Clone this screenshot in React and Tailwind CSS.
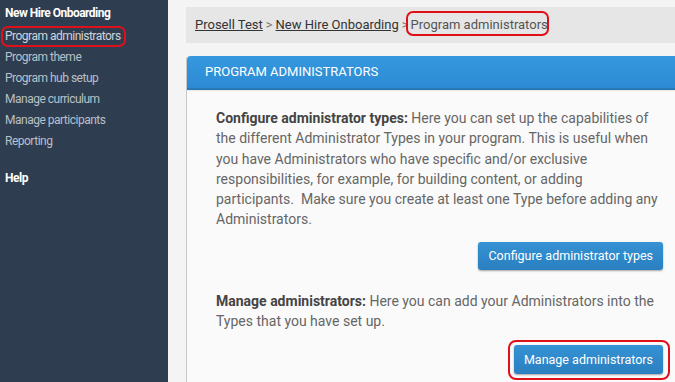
import React from "react";

const items = [
  "Program theme",
  "Program hub setup",
  "Manage curriculum",
  "Manage participants",
  "Reporting",
];

export default function App() {
  return (
    <div className="flex h-[382px] w-[675px] overflow-hidden bg-[#f4f4f4]" style={{ fontFamily: "Roboto, 'Liberation Sans', sans-serif" }}>
      <aside className="w-[168px] shrink-0 bg-[#2e3d4f] pl-[5px] pt-[3px] text-[12px] tracking-[-0.5px]">
        <div className="font-bold text-white leading-[21px]">New Hire Onboarding</div>
        <div className="relative mt-[2px] leading-[21px] text-[#cfd4da]">
          <span className="absolute left-[-4px] top-[0px] h-[21px] w-[125px] rounded-[7px] border-2 border-[#e0101a]" />
          Program administrators
        </div>
        {items.map((t) => (
          <div key={t} className="leading-[21px] text-[#b9c0c8]">
            {t}
          </div>
        ))}
        <div className="mt-[16px] font-bold text-white leading-[21px]">Help</div>
      </aside>
      <main className="flex-1 pl-[18px] pt-[7px]">
        <div className="flex h-[36px] items-center bg-[#e6e6e6] pl-[9px] text-[13px] text-[#777]">
          <span className="text-[#333] underline">Prosell Test</span>
          <span className="mx-[3px]">&gt;</span>
          <span className="text-[#333] underline">New Hire Onboarding</span>
          <span className="ml-[3px]">&gt;</span>
          <span className="relative ml-[2px] text-[#555]">
            <span className="absolute left-[-5px] top-[-4px] h-[25px] w-[143px] rounded-[7px] border-2 border-[#e0101a]" />
            Program administrators
          </span>
        </div>
        <div className="mt-[13px] h-[400px] rounded-tl-[4px] border-l border-[#c8c8c8] bg-[#fafafa]">
          <div className="flex h-[34px] items-center rounded-tl-[4px] border-b-2 border-[#2a78b4] bg-gradient-to-b from-[#3598de] to-[#2c8ad4] pl-[18px] text-[13px] text-white">
            PROGRAM ADMINISTRATORS
          </div>
          <div className="border-t border-[#e8e8e8] pl-[29px] pr-[12px] pt-[17px] text-[14px] leading-[20.3px] text-[#666]">
            <p>
              <span className="font-bold text-[#444]">Configure administrator types:</span> Here you can set up the capabilities of the different Administrator Types in your program. This is useful when you have Administrators who have specific and/or exclusive responsibilities, for example, for building content, or adding participants.&nbsp; Make sure you create at least one Type before adding any Administrators.
            </p>
            <div className="mt-[12px] flex justify-end">
              <button className="h-[28px] rounded-[3px] bg-gradient-to-b from-[#3592d4] to-[#2a7fc0] px-[10px] text-[12.5px] text-white shadow-[0_1px_2px_rgba(0,0,0,0.35)]">
                Configure administrator types
              </button>
            </div>
            <p className="mt-[21px]">
              <span className="font-bold text-[#444]">Manage administrators:</span> Here you can add your Administrators into the Types that you have set up.
            </p>
            <div className="mt-[14px] flex justify-end">
              <div className="relative">
                <span className="absolute left-[-6px] top-[-5px] h-[40px] w-[162px] rounded-[8px] border-2 border-[#e0101a]" />
                <button className="h-[29px] rounded-[3px] bg-gradient-to-b from-[#3592d4] to-[#2a7fc0] px-[10px] text-[12.5px] text-white shadow-[0_1px_2px_rgba(0,0,0,0.35)]">
                  Manage administrators
                </button>
              </div>
            </div>
          </div>
        </div>
      </main>
    </div>
  );
}
